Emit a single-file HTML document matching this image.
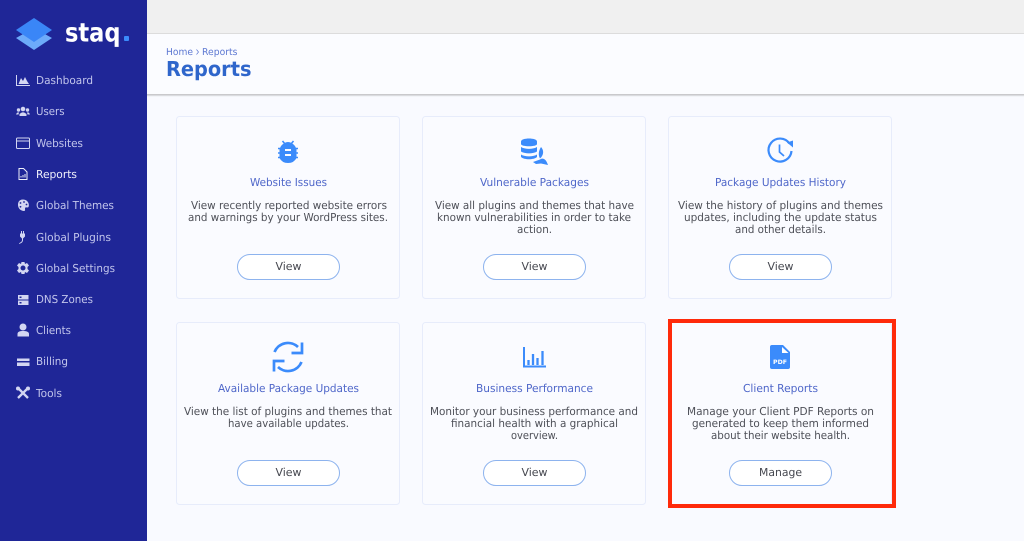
<!DOCTYPE html>
<html><head><meta charset="utf-8"><title>Reports</title>
<style>
html,body{margin:0;padding:0;width:1024px;height:541px;overflow:hidden;background:#f9faff}
svg{display:block;filter:blur(.3px)}
text{font-family:"DejaVu Sans","Liberation Sans",sans-serif}
.n{font-size:11px;fill:#c3c6ec}
.t{font-size:11px;fill:#4e66c9;text-anchor:start}
.b{font-size:11px;fill:#4d4f57}
.v{font-size:11px;fill:#45474f}
.c{fill:#fafbff;stroke:#e7ecfb;stroke-width:1}
.p{fill:#fff;stroke:#8db3ee;stroke-width:1}
.i{fill:#3b8bfb}
.s{fill:none;stroke:#3b8bfb}
.w{fill:#d3d6f2}
.o{fill:none;stroke:#d3d6f2}
</style></head><body>
<svg width="1024" height="541" viewBox="0 0 1024 541" xmlns="http://www.w3.org/2000/svg" text-rendering="geometricPrecision">
<rect width="1024" height="541" fill="#f9faff"/>
<rect x="147" y="0" width="877" height="33" fill="#f0f0f0"/>
<rect x="147" y="33" width="877" height="1" fill="#dcdcdc"/>
<rect x="147" y="34" width="877" height="60" fill="#fbfcff"/>
<rect x="147" y="94" width="877" height="1.5" fill="#c9c9cc"/>
<rect x="147" y="95.5" width="877" height="1" fill="#ecedf2"/>
<rect x="0" y="0" width="147" height="541" fill="#1f2697"/>

<!-- logo -->
<path d="M16 38L34 28L52 38L34 50Z" fill="#6dabfa"/>
<path d="M16 30L34 18L52 30L34 42Z" fill="#3a86f7"/>
<text x="65" y="41.500" font-size="26" font-weight="700" fill="#fff" textLength="55.500" lengthAdjust="spacingAndGlyphs">staq</text>
<rect x="124" y="36" width="5" height="5" rx="1" fill="#3b8bfb"/>

<!-- nav -->
<text class="n" x="36" y="84" textLength="57" lengthAdjust="spacingAndGlyphs">Dashboard</text>
<text class="n" x="36" y="115" textLength="28.500" lengthAdjust="spacingAndGlyphs">Users</text>
<text class="n" x="36" y="147" textLength="47" lengthAdjust="spacingAndGlyphs">Websites</text>
<text class="n" x="36" y="178" textLength="41" lengthAdjust="spacingAndGlyphs" style="fill:#f0f1fb">Reports</text>
<text class="n" x="36" y="209" textLength="78" lengthAdjust="spacingAndGlyphs">Global Themes</text>
<text class="n" x="36" y="241" textLength="75" lengthAdjust="spacingAndGlyphs">Global Plugins</text>
<text class="n" x="36" y="272" textLength="79" lengthAdjust="spacingAndGlyphs">Global Settings</text>
<text class="n" x="36" y="303" textLength="57" lengthAdjust="spacingAndGlyphs">DNS Zones</text>
<text class="n" x="36" y="334" textLength="35" lengthAdjust="spacingAndGlyphs">Clients</text>
<text class="n" x="36" y="365" textLength="32" lengthAdjust="spacingAndGlyphs">Billing</text>
<text class="n" x="36" y="397" textLength="26" lengthAdjust="spacingAndGlyphs">Tools</text>

<!-- nav icons -->
<path class="o" d="M16.500 75V85.500H30"/>
<path class="w" d="M18.500 84L21 78L23 81L25 77L27 81L29 84Z"/>
<g class="w"><circle cx="23" cy="109" r="2.300"/><circle cx="18.500" cy="110" r="1.700"/><circle cx="27.500" cy="110" r="1.700"/><path d="M19.500 116V114Q23 110.500 26.500 114V116Z"/><path d="M16 114.500Q17 111.800 19 112.500L18.500 114.500ZM30 114.500Q29 111.800 27 112.500L27.500 114.500Z"/></g>
<rect class="o" x="16.500" y="138" width="13" height="10.500" rx="1"/><path class="o" d="M16.500 141H29.500"/>
<path d="M19 168.500H23.500L27 172V179.500H19Z" fill="none" stroke="#eef0fb"/><path d="M21 177.500V176M23 177.500V175M25 177.500V174" stroke="#eef0fb"/>
<path class="w" d="M23 199.500C18.500 199.500 18 203 18 205C18 208.500 21 211 24 211C25.500 211 25 209.500 25 208.500C25 207 26.500 207.500 27.500 207.500C28.700 207.500 29 206 28.800 204.500C28.500 201.500 26 199.500 23 199.500Z"/>
<g fill="#1f2697"><circle cx="20.500" cy="203" r=".9"/><circle cx="24" cy="202" r=".9"/><circle cx="26.500" cy="204.500" r=".9"/><circle cx="20.500" cy="206.800" r=".9"/></g>
<path class="w" d="M21 231V233.500H20V236.500L22 238.500V240C22 242 20.500 242 19 243.500L19.500 244C21 243 23 242.500 23 240V238.500L25 236.500V233.500H24V231H23V233.500H22V231Z"/>
<path class="w" fill-rule="evenodd" d="M21.500 262H24.500L25 264L27 263L29 265.500L27.500 267V269L29 270.500L27 273L25 272L24.500 274H21.500L21 272L19 273L17 270.500L18.500 269V267L17 265.500L19 263L21 264ZM23 265.500A2.500 2.500 0 1 0 23 270.500A2.500 2.500 0 1 0 23 265.500Z"/>
<g class="w"><rect x="18" y="295" width="10.500" height="4.500"/><rect x="18" y="300.500" width="10.500" height="4.500"/></g>
<g fill="#1f2697"><rect x="19.500" y="296.500" width="2" height="1.500"/><rect x="19.500" y="302" width="2" height="1.500"/></g>
<circle class="w" cx="23" cy="327" r="3.500"/><path class="w" d="M17.500 336.500V334C17.500 331.500 20 331 23 331C26 331 29 331.500 29 334V336.500Z"/>
<path class="w" d="M17 358.500H29.500V361H17ZM17 362.500H29.500V366H17Z"/>
<path d="M18 388L28 398M28 388L18 398" stroke="#d3d6f2" stroke-width="2.300"/><circle class="w" cx="28" cy="388.500" r="2"/><circle class="w" cx="18" cy="388.500" r="2"/>

<!-- header -->
<text x="166" y="55" font-size="9.500" fill="#5d78d2" textLength="27" lengthAdjust="spacingAndGlyphs">Home</text>
<path d="M196.500 49.500L198.500 52L196.500 54.500" fill="none" stroke="#5d78d2" stroke-width=".7"/>
<text x="202" y="55" font-size="9.500" fill="#5d78d2" textLength="35.500" lengthAdjust="spacingAndGlyphs">Reports</text>
<text x="166" y="76" font-size="20.500" font-weight="700" fill="#2f66cb" textLength="85.500" lengthAdjust="spacingAndGlyphs">Reports</text>

<!-- cards -->
<rect class="c" x="176.500" y="116.500" width="223" height="182" rx="3"/>
<rect class="c" x="422.500" y="116.500" width="223" height="182" rx="3"/>
<rect class="c" x="668.500" y="116.500" width="223" height="182" rx="3"/>
<rect class="c" x="176.500" y="322.500" width="223" height="182" rx="3"/>
<rect class="c" x="422.500" y="322.500" width="223" height="182" rx="3"/>
<rect class="c" x="668.500" y="322.500" width="223" height="182" rx="3"/>

<!-- card icons -->
<g>
<path class="i" d="M281 146Q288 138 295 146L296.500 149V158Q294 163 288 163Q282 163 279.500 158V149Z"/>
<path d="M282.500 141L285 144M293.500 141L291 144M278 148.500H298M278 153H298M278 157.500H298" stroke="#3b8bfb" stroke-width="1.600" fill="none"/>
<rect x="285" y="149" width="6" height="2" fill="#fafbff"/><rect x="285" y="154" width="6" height="2" fill="#fafbff"/>
</g>
<g>
<path class="i" d="M521 141.500C521 137.500 537 137.500 537 141.500V144C537 147 521 147 521 144Z"/>
<path class="i" d="M521 147C525 149.500 533 149.500 537 147V151.500C533 154 525 154 521 151.500Z"/>
<path class="i" d="M521 154.500C525 157 533 157 537 154.500V157C534 160 524 160 521 157Z"/>
<path class="i" d="M541 147C544 150 544 155 540 158.500C538 155 538.500 151 541 147Z"/>
<path class="i" d="M533 162L540 159.500C543 157.500 546 159 548 165L541 163.500L536 164Z"/>
</g>
<g fill="none" stroke="#3b8bfb" stroke-width="2.200">
<path d="M789.500 143.500A11.500 11.500 0 1 0 791.500 151"/>
<path d="M779.500 144.500V152L784 156" stroke-width="1.700"/>
</g>
<path class="i" d="M787 142.500L793 140.500V147.500Z"/>
<g fill="none" stroke="#3b8bfb" stroke-width="2.700">
<path d="M274.500 352A14.500 14.500 0 0 1 298 347"/>
<path d="M301.500 362A14.500 14.500 0 0 1 278 367"/>
<path d="M302 342.500V353H291.500"/>
<path d="M274 371.500V361H284.500"/>
</g>
<g class="s" stroke-width="2">
<path d="M524 347V366.500H546" />
<path d="M528.500 365V360M533 365V354M537.500 365V358M542.500 365V351" stroke-width="2.300"/>
</g>
<path class="i" d="M772 345H783L790 352V367Q790 369 788 369H772Q770 369 770 367V347Q770 345 772 345Z"/>
<path d="M782 347L788.500 353H782Z" fill="#fff"/>
<text x="773" y="364" font-size="6" font-weight="700" fill="#fff" textLength="14" lengthAdjust="spacingAndGlyphs">PDF</text>

<!-- titles -->
<text class="t" x="250" y="186" textLength="77" lengthAdjust="spacingAndGlyphs">Website Issues</text>
<text class="t" x="480" y="186" textLength="109" lengthAdjust="spacingAndGlyphs">Vulnerable Packages</text>
<text class="t" x="715" y="186" textLength="131" lengthAdjust="spacingAndGlyphs">Package Updates History</text>
<text class="t" x="218" y="392" textLength="141" lengthAdjust="spacingAndGlyphs">Available Package Updates</text>
<text class="t" x="476" y="392" textLength="117" lengthAdjust="spacingAndGlyphs">Business Performance</text>
<text class="t" x="743" y="392" textLength="75" lengthAdjust="spacingAndGlyphs">Client Reports</text>

<!-- body -->
<text class="b" x="191" y="209" textLength="196" lengthAdjust="spacingAndGlyphs">View recently reported website errors</text>
<text class="b" x="188" y="221" textLength="200" lengthAdjust="spacingAndGlyphs">and warnings by your WordPress sites.</text>
<text class="b" x="435" y="209" textLength="199" lengthAdjust="spacingAndGlyphs">View all plugins and themes that have</text>
<text class="b" x="437" y="221" textLength="194" lengthAdjust="spacingAndGlyphs">known vulnerabilities in order to take</text>
<text class="b" x="517" y="233" textLength="35" lengthAdjust="spacingAndGlyphs">action.</text>
<text class="b" x="678" y="209" textLength="205" lengthAdjust="spacingAndGlyphs">View the history of plugins and themes</text>
<text class="b" x="684" y="221" textLength="193" lengthAdjust="spacingAndGlyphs">updates, including the update status</text>
<text class="b" x="735" y="233" textLength="91" lengthAdjust="spacingAndGlyphs">and other details.</text>
<text class="b" x="184" y="415" textLength="208" lengthAdjust="spacingAndGlyphs">View the list of plugins and themes that</text>
<text class="b" x="228" y="427" textLength="121" lengthAdjust="spacingAndGlyphs">have available updates.</text>
<text class="b" x="430" y="415" textLength="208" lengthAdjust="spacingAndGlyphs">Monitor your business performance and</text>
<text class="b" x="451" y="427" textLength="167" lengthAdjust="spacingAndGlyphs">financial health with a graphical</text>
<text class="b" x="511" y="439" textLength="47" lengthAdjust="spacingAndGlyphs">overview.</text>
<text class="b" x="687" y="415" textLength="187" lengthAdjust="spacingAndGlyphs">Manage your Client PDF Reports on</text>
<text class="b" x="692" y="427" textLength="177" lengthAdjust="spacingAndGlyphs">generated to keep them informed</text>
<text class="b" x="711" y="439" textLength="139" lengthAdjust="spacingAndGlyphs">about their website health.</text>

<!-- buttons -->
<rect class="p" x="237.500" y="254.500" width="102" height="25" rx="12.500"/>
<rect class="p" x="483.500" y="254.500" width="102" height="25" rx="12.500"/>
<rect class="p" x="729.500" y="254.500" width="102" height="25" rx="12.500"/>
<rect class="p" x="237.500" y="460.500" width="102" height="25" rx="12.500"/>
<rect class="p" x="483.500" y="460.500" width="102" height="25" rx="12.500"/>
<rect class="p" x="729.500" y="460.500" width="102" height="25" rx="12.500"/>
<text class="v" x="275.500" y="270" textLength="26" lengthAdjust="spacingAndGlyphs">View</text>
<text class="v" x="521.500" y="270" textLength="26" lengthAdjust="spacingAndGlyphs">View</text>
<text class="v" x="767.500" y="270" textLength="26" lengthAdjust="spacingAndGlyphs">View</text>
<text class="v" x="275.500" y="476" textLength="26" lengthAdjust="spacingAndGlyphs">View</text>
<text class="v" x="521.500" y="476" textLength="26" lengthAdjust="spacingAndGlyphs">View</text>
<text class="v" x="759" y="476" textLength="43" lengthAdjust="spacingAndGlyphs">Manage</text>

<!-- highlight -->
<rect x="670" y="321" width="224" height="185" fill="none" stroke="#ff2a0a" stroke-width="4"/>
</svg>
</body></html>
